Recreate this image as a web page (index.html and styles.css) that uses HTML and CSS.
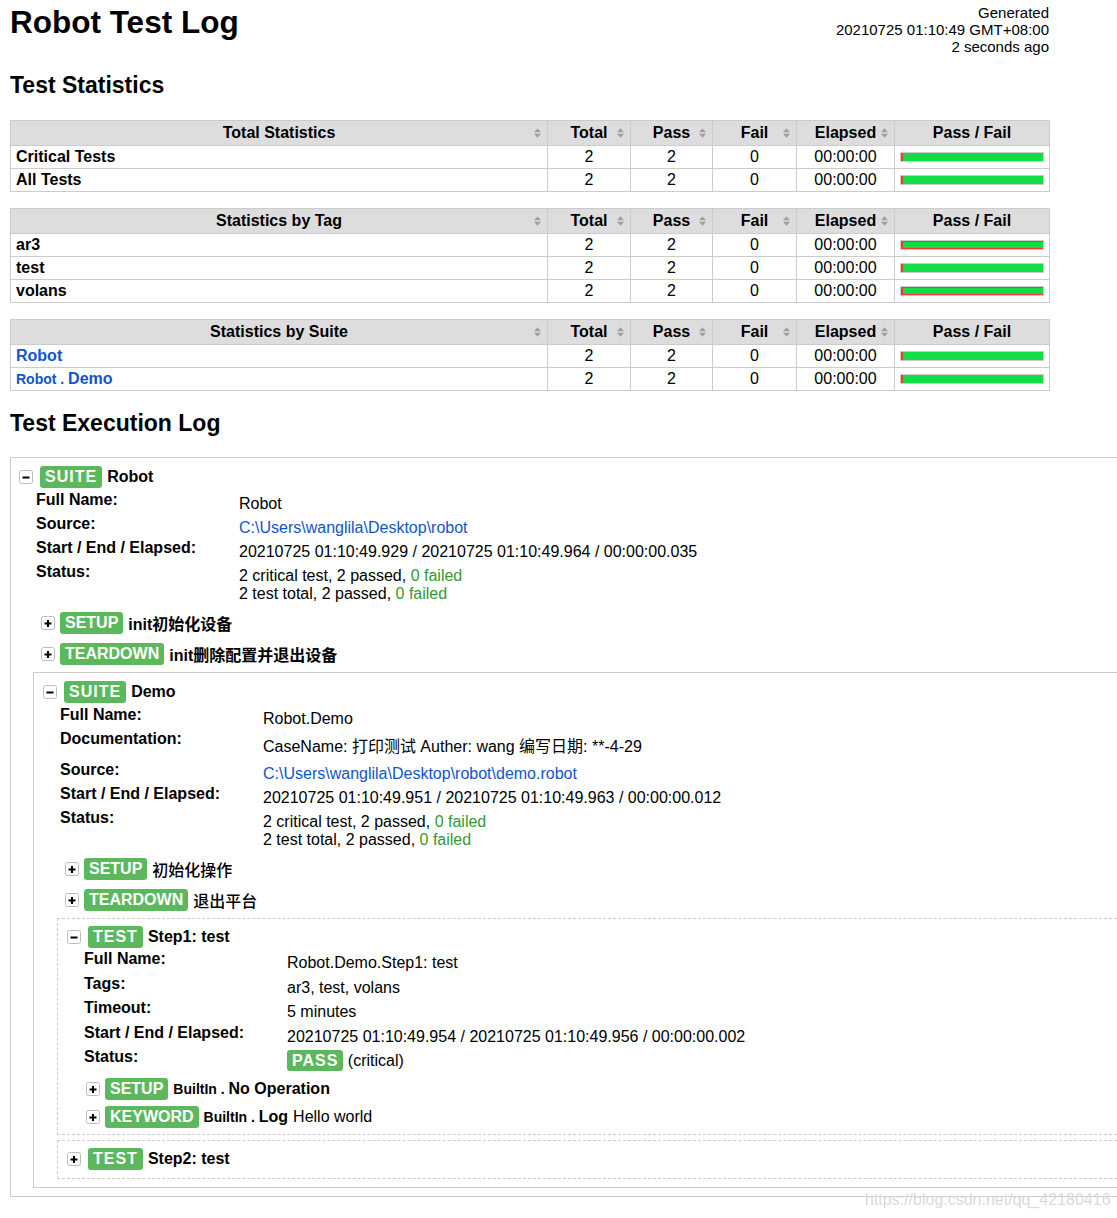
FILE: index.html
```html
<!DOCTYPE html>
<html lang="zh-CN">
<head>
<meta charset="utf-8">
<title>Robot Test Log</title>
<link rel="stylesheet" href="styles.css">
</head>
<body>
<div class="header">
  <h1>Robot Test Log</h1>
  <div class="generated">Generated<br>20210725 01:10:49 GMT+08:00<br>2 seconds ago</div>
</div>

<h2 class="sec-title">Test Statistics</h2>

<table class="statistics">
  <colgroup><col><col class="c-stat"><col class="c-stat2"><col class="c-stat3"><col class="c-elapsed"><col class="c-graph"></colgroup>
  <thead>
    <tr>
      <th>Total Statistics<svg class="sort" width="7" height="10" viewBox="0 0 7 10"><path d="M0 4.3L3.5 0.3L7 4.3Z M0 5.7L7 5.7L3.5 9.7Z" fill="#a0a0a0"/></svg></th>
      <th>Total<svg class="sort" width="7" height="10" viewBox="0 0 7 10"><path d="M0 4.3L3.5 0.3L7 4.3Z M0 5.7L7 5.7L3.5 9.7Z" fill="#a0a0a0"/></svg></th>
      <th>Pass<svg class="sort" width="7" height="10" viewBox="0 0 7 10"><path d="M0 4.3L3.5 0.3L7 4.3Z M0 5.7L7 5.7L3.5 9.7Z" fill="#a0a0a0"/></svg></th>
      <th>Fail<svg class="sort" width="7" height="10" viewBox="0 0 7 10"><path d="M0 4.3L3.5 0.3L7 4.3Z M0 5.7L7 5.7L3.5 9.7Z" fill="#a0a0a0"/></svg></th>
      <th>Elapsed<svg class="sort" width="7" height="10" viewBox="0 0 7 10"><path d="M0 4.3L3.5 0.3L7 4.3Z M0 5.7L7 5.7L3.5 9.7Z" fill="#a0a0a0"/></svg></th>
      <th>Pass / Fail</th>
    </tr>
  </thead>
  <tbody>
    <tr><td class="stat-name">Critical Tests</td><td>2</td><td>2</td><td>0</td><td>00:00:00</td><td><div class="graph"><div class="pass-bar"></div></div></td></tr>
    <tr><td class="stat-name">All Tests</td><td>2</td><td>2</td><td>0</td><td>00:00:00</td><td><div class="graph"><div class="pass-bar"></div></div></td></tr>
  </tbody>
</table>

<table class="statistics">
  <colgroup><col><col class="c-stat"><col class="c-stat2"><col class="c-stat3"><col class="c-elapsed"><col class="c-graph"></colgroup>
  <thead>
    <tr>
      <th>Statistics by Tag<svg class="sort" width="7" height="10" viewBox="0 0 7 10"><path d="M0 4.3L3.5 0.3L7 4.3Z M0 5.7L7 5.7L3.5 9.7Z" fill="#a0a0a0"/></svg></th>
      <th>Total<svg class="sort" width="7" height="10" viewBox="0 0 7 10"><path d="M0 4.3L3.5 0.3L7 4.3Z M0 5.7L7 5.7L3.5 9.7Z" fill="#a0a0a0"/></svg></th>
      <th>Pass<svg class="sort" width="7" height="10" viewBox="0 0 7 10"><path d="M0 4.3L3.5 0.3L7 4.3Z M0 5.7L7 5.7L3.5 9.7Z" fill="#a0a0a0"/></svg></th>
      <th>Fail<svg class="sort" width="7" height="10" viewBox="0 0 7 10"><path d="M0 4.3L3.5 0.3L7 4.3Z M0 5.7L7 5.7L3.5 9.7Z" fill="#a0a0a0"/></svg></th>
      <th>Elapsed<svg class="sort" width="7" height="10" viewBox="0 0 7 10"><path d="M0 4.3L3.5 0.3L7 4.3Z M0 5.7L7 5.7L3.5 9.7Z" fill="#a0a0a0"/></svg></th>
      <th>Pass / Fail</th>
    </tr>
  </thead>
  <tbody>
    <tr><td class="stat-name">ar3</td><td>2</td><td>2</td><td>0</td><td>00:00:00</td><td><div class="graph edge"><div class="pass-bar"></div></div></td></tr>
    <tr><td class="stat-name">test</td><td>2</td><td>2</td><td>0</td><td>00:00:00</td><td><div class="graph"><div class="pass-bar"></div></div></td></tr>
    <tr><td class="stat-name">volans</td><td>2</td><td>2</td><td>0</td><td>00:00:00</td><td><div class="graph edge"><div class="pass-bar"></div></div></td></tr>
  </tbody>
</table>

<table class="statistics">
  <colgroup><col><col class="c-stat"><col class="c-stat2"><col class="c-stat3"><col class="c-elapsed"><col class="c-graph"></colgroup>
  <thead>
    <tr>
      <th>Statistics by Suite<svg class="sort" width="7" height="10" viewBox="0 0 7 10"><path d="M0 4.3L3.5 0.3L7 4.3Z M0 5.7L7 5.7L3.5 9.7Z" fill="#a0a0a0"/></svg></th>
      <th>Total<svg class="sort" width="7" height="10" viewBox="0 0 7 10"><path d="M0 4.3L3.5 0.3L7 4.3Z M0 5.7L7 5.7L3.5 9.7Z" fill="#a0a0a0"/></svg></th>
      <th>Pass<svg class="sort" width="7" height="10" viewBox="0 0 7 10"><path d="M0 4.3L3.5 0.3L7 4.3Z M0 5.7L7 5.7L3.5 9.7Z" fill="#a0a0a0"/></svg></th>
      <th>Fail<svg class="sort" width="7" height="10" viewBox="0 0 7 10"><path d="M0 4.3L3.5 0.3L7 4.3Z M0 5.7L7 5.7L3.5 9.7Z" fill="#a0a0a0"/></svg></th>
      <th>Elapsed<svg class="sort" width="7" height="10" viewBox="0 0 7 10"><path d="M0 4.3L3.5 0.3L7 4.3Z M0 5.7L7 5.7L3.5 9.7Z" fill="#a0a0a0"/></svg></th>
      <th>Pass / Fail</th>
    </tr>
  </thead>
  <tbody>
    <tr><td class="stat-name"><a href="#s1">Robot</a></td><td>2</td><td>2</td><td>0</td><td>00:00:00</td><td><div class="graph"><div class="pass-bar"></div></div></td></tr>
    <tr><td class="stat-name"><a href="#s1-s1"><span class="parent-name">Robot . </span>Demo</a></td><td>2</td><td>2</td><td>0</td><td>00:00:00</td><td><div class="graph"><div class="pass-bar"></div></div></td></tr>
  </tbody>
</table>

<h2 class="sec-title exec">Test Execution Log</h2>

<div class="log">
  <div class="suite top" id="s1">
    <div class="eh">
      <svg class="tg" width="14" height="14" viewBox="0 0 14 14"><rect x="0.5" y="0.5" width="13" height="13" rx="2" fill="#fff" stroke="#bdbdbd"/><path d="M3.5 7.5h7" stroke="#000" stroke-width="2"/></svg>
      <span class="label sp">SUITE</span><span class="name">Robot</span>
    </div>
    <table class="metadata">
      <tr><th>Full Name:</th><td>Robot</td></tr>
      <tr><th>Source:</th><td><a href="#">C:\Users\wanglila\Desktop\robot</a></td></tr>
      <tr><th>Start / End / Elapsed:</th><td>20210725 01:10:49.929 / 20210725 01:10:49.964 / 00:00:00.035</td></tr>
      <tr><th>Status:</th><td>2 critical test, 2 passed, <span class="pass">0 failed</span><br>2 test total, 2 passed, <span class="pass">0 failed</span></td></tr>
    </table>
    <div class="children">
      <div class="keyword">
        <div class="eh">
          <svg class="tg" width="14" height="14" viewBox="0 0 14 14"><rect x="0.5" y="0.5" width="13" height="13" rx="2" fill="#fff" stroke="#bdbdbd"/><path d="M3.5 7.5h7M7 4v7" stroke="#000" stroke-width="2"/></svg>
          <span class="label">SETUP</span><span class="name">init初始化设备</span>
        </div>
      </div>
      <div class="keyword">
        <div class="eh">
          <svg class="tg" width="14" height="14" viewBox="0 0 14 14"><rect x="0.5" y="0.5" width="13" height="13" rx="2" fill="#fff" stroke="#bdbdbd"/><path d="M3.5 7.5h7M7 4v7" stroke="#000" stroke-width="2"/></svg>
          <span class="label">TEARDOWN</span><span class="name">init删除配置并退出设备</span>
        </div>
      </div>

      <div class="suite" id="s1-s1">
        <div class="eh">
          <svg class="tg" width="14" height="14" viewBox="0 0 14 14"><rect x="0.5" y="0.5" width="13" height="13" rx="2" fill="#fff" stroke="#bdbdbd"/><path d="M3.5 7.5h7" stroke="#000" stroke-width="2"/></svg>
          <span class="label sp">SUITE</span><span class="name">Demo</span>
        </div>
        <table class="metadata">
          <tr><th>Full Name:</th><td>Robot.Demo</td></tr>
          <tr><th>Documentation:</th><td class="doc">CaseName: 打印测试 Auther: wang 编写日期: **-4-29</td></tr>
          <tr><th>Source:</th><td><a href="#">C:\Users\wanglila\Desktop\robot\demo.robot</a></td></tr>
          <tr><th>Start / End / Elapsed:</th><td>20210725 01:10:49.951 / 20210725 01:10:49.963 / 00:00:00.012</td></tr>
          <tr><th>Status:</th><td>2 critical test, 2 passed, <span class="pass">0 failed</span><br>2 test total, 2 passed, <span class="pass">0 failed</span></td></tr>
        </table>
        <div class="children">
          <div class="keyword">
            <div class="eh">
              <svg class="tg" width="14" height="14" viewBox="0 0 14 14"><rect x="0.5" y="0.5" width="13" height="13" rx="2" fill="#fff" stroke="#bdbdbd"/><path d="M3.5 7.5h7M7 4v7" stroke="#000" stroke-width="2"/></svg>
              <span class="label">SETUP</span><span class="name cjk-light">初始化操作</span>
            </div>
          </div>
          <div class="keyword">
            <div class="eh">
              <svg class="tg" width="14" height="14" viewBox="0 0 14 14"><rect x="0.5" y="0.5" width="13" height="13" rx="2" fill="#fff" stroke="#bdbdbd"/><path d="M3.5 7.5h7M7 4v7" stroke="#000" stroke-width="2"/></svg>
              <span class="label">TEARDOWN</span><span class="name cjk-light">退出平台</span>
            </div>
          </div>

          <div class="test">
            <div class="eh">
              <svg class="tg" width="14" height="14" viewBox="0 0 14 14"><rect x="0.5" y="0.5" width="13" height="13" rx="2" fill="#fff" stroke="#bdbdbd"/><path d="M3.5 7.5h7" stroke="#000" stroke-width="2"/></svg>
              <span class="label sp">TEST</span><span class="name">Step1: test</span>
            </div>
            <table class="metadata">
              <tr><th>Full Name:</th><td>Robot.Demo.Step1: test</td></tr>
              <tr><th>Tags:</th><td>ar3, test, volans</td></tr>
              <tr><th>Timeout:</th><td>5 minutes</td></tr>
              <tr><th>Start / End / Elapsed:</th><td>20210725 01:10:49.954 / 20210725 01:10:49.956 / 00:00:00.002</td></tr>
              <tr><th>Status:</th><td><span class="label sp inl">PASS</span> (critical)</td></tr>
            </table>
            <div class="children">
              <div class="keyword">
                <div class="eh">
                  <svg class="tg" width="14" height="14" viewBox="0 0 14 14"><rect x="0.5" y="0.5" width="13" height="13" rx="2" fill="#fff" stroke="#bdbdbd"/><path d="M3.5 7.5h7M7 4v7" stroke="#000" stroke-width="2"/></svg>
                  <span class="label">SETUP</span><span class="name"><span class="parent-name">BuiltIn . </span>No Operation</span>
                </div>
              </div>
              <div class="keyword">
                <div class="eh">
                  <svg class="tg" width="14" height="14" viewBox="0 0 14 14"><rect x="0.5" y="0.5" width="13" height="13" rx="2" fill="#fff" stroke="#bdbdbd"/><path d="M3.5 7.5h7M7 4v7" stroke="#000" stroke-width="2"/></svg>
                  <span class="label">KEYWORD</span><span class="name"><span class="parent-name">BuiltIn . </span>Log</span><span class="arg">Hello world</span>
                </div>
              </div>
            </div>
          </div>

          <div class="test closed">
            <div class="eh">
              <svg class="tg" width="14" height="14" viewBox="0 0 14 14"><rect x="0.5" y="0.5" width="13" height="13" rx="2" fill="#fff" stroke="#bdbdbd"/><path d="M3.5 7.5h7M7 4v7" stroke="#000" stroke-width="2"/></svg>
              <span class="label sp">TEST</span><span class="name">Step2: test</span>
            </div>
          </div>
        </div>
      </div>
    </div>
  </div>
</div>

<div class="watermark">https://blog.csdn.net/qq_42180416</div>
</body>
</html>
```

FILE: styles.css
```css
html, body {
  margin: 0;
  padding: 0;
  overflow: hidden;
}

body {
  font-family: "Liberation Sans", Arial, "Noto Sans CJK SC", sans-serif;
  font-size: 16px;
  color: #000;
  background: #fff;
  padding-left: 10px;
}

a {
  color: #15c;
  text-decoration: none;
}

/* Header */
.header {
  display: flex;
  justify-content: space-between;
  align-items: flex-start;
  width: 1039px;
  padding-top: 4px;
}

.header h1 {
  margin: 0;
  font-size: 31.5px;
  line-height: 37px;
  font-weight: bold;
}

.generated {
  font-size: 15px;
  line-height: 17px;
  text-align: right;
  white-space: nowrap;
}

.sec-title {
  font-size: 23px;
  line-height: 27px;
  font-weight: bold;
  margin: 17px 0 21px;
}

.sec-title.exec {
  margin: 19px 0 20px;
}

/* Statistics tables */
.statistics {
  width: 1040px;
  table-layout: fixed;
  border-collapse: collapse;
  margin: 0 0 16px;
  line-height: 18px;
}

.c-stat { width: 83px; }
.c-stat2 { width: 82px; }
.c-stat3 { width: 84px; }
.c-elapsed { width: 98px; }
.c-graph { width: 155px; }

.statistics th,
.statistics td {
  border: 1px solid #ccc;
  padding: 2px 5px;
}

.statistics th {
  position: relative;
  background: #ddd;
  padding: 3px 5px;
  text-align: center;
  font-weight: bold;
}

.statistics td {
  text-align: center;
  vertical-align: middle;
}

.statistics td.stat-name {
  text-align: left;
  font-weight: bold;
}

.sort {
  position: absolute;
  right: 6px;
  top: 50%;
  margin-top: -5px;
}

.parent-name {
  font-size: 14px;
}

.graph {
  display: flex;
  height: 8px;
  border: 1px solid #ccc;
  background: #f33;
  padding-left: 2px;
}

.graph.edge {
  height: 6px;
  padding: 1px 0 1px 2px;
}

.pass-bar {
  flex: 1;
  background: #1d4;
}

/* Execution log */
.log {
  margin-right: -12px;
}

.suite {
  border: 1px solid #ccc;
  padding: 7px 0 8px 9px;
}

.log > .suite {
  padding-left: 8px;
}

.test {
  border: 1px dashed #ccc;
  padding: 6px 0 4px 9px;
}

.test.closed {
  padding-bottom: 7px;
}

.keyword {
  padding-left: 8px;
}

.eh {
  display: flex;
  align-items: center;
  height: 24px;
  white-space: nowrap;
}

.keyword > .eh {
  height: 26px;
}

.tg {
  flex: none;
  margin-right: 7px;
}

.keyword .tg {
  margin-right: 5px;
}

.label {
  display: inline-block;
  background: #5cb85c;
  color: #fff;
  font-weight: bold;
  line-height: 18px;
  padding: 2px 5px;
  border-radius: 3px;
  margin-right: 5px;
}

.label.sp {
  letter-spacing: 1px;
}

.label.inl {
  display: inline;
  margin-right: 0;
}

.name {
  font-weight: bold;
}

.name.cjk-light {
  font-weight: 500;
}

.keyword .parent-name {
  font-size: 14px;
}

.arg {
  margin-left: 5px;
}

.metadata {
  border-collapse: collapse;
  margin: 2px 0 0 17px;
  line-height: 18px;
}

.metadata th {
  width: 203px;
  padding: 0;
  text-align: left;
  vertical-align: top;
  font-weight: bold;
}

.metadata td {
  padding: 4px 0 2px;
  vertical-align: top;
}

.metadata td.doc {
  padding: 8px 0 5px;
}

.test > .metadata {
  margin-top: 1px;
}

.test > .metadata td {
  padding-bottom: 2.5px;
}

.pass {
  color: #393;
}

.children {
  margin-left: 14px;
}

.children > * {
  margin-top: 5px;
}

.test > .children {
  margin-left: 11px;
}

.test > .children > * {
  margin-top: 2px;
}

.test > .children > :first-child {
  margin-top: 3px;
}

.watermark {
  position: fixed;
  left: 865px;
  top: 1191px;
  font-size: 16px;
  line-height: 18px;
  color: #d9d9d9;
  white-space: nowrap;
}
```
